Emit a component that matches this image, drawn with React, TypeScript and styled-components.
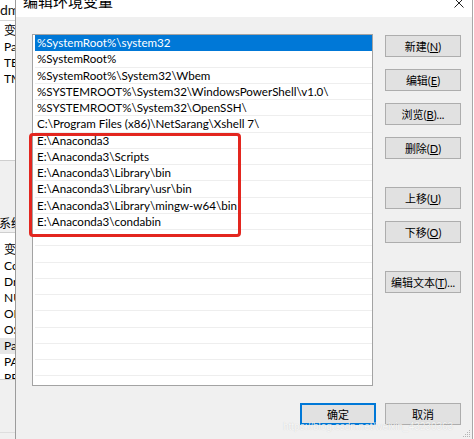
import React from "react";
import styled, { createGlobalStyle } from "styled-components";

const GlobalStyle = createGlobalStyle`
  html, body { margin: 0; padding: 0; background: #ffffff; }
  body { font-family: "Lato", "Noto Sans CJK SC", sans-serif; color: #000; }
`;

const Screen = styled.div`
  width: 474px;
  height: 439px;
  overflow: hidden;
  display: flex;
  background: #ffffff;
`;

/* ---------- background window (left strip) ---------- */
const BackWindow = styled.div`
  width: 15px;
  flex: none;
  overflow: hidden;
  display: flex;
  flex-direction: column;
  background: #f0f0f0;
  font-size: 12px;
`;

const BackTitle = styled.div`
  height: 21px;
  flex: none;
  box-sizing: border-box;
  background: #ffffff;
  border-bottom: 1px solid #d6d6d6;
  font-size: 14px;
  line-height: 20px;
  white-space: nowrap;
  color: #111;
`;

const BackList = styled.div<{ $height: number; $padTop: number }>`
  height: ${(p) => p.$height}px;
  flex: none;
  box-sizing: border-box;
  background: #ffffff;
  border-bottom: 1px solid #cfcfcf;
  padding-top: ${(p) => p.$padTop}px;
  overflow: hidden;
`;

const BackListTop = styled(BackList)`
  border-top: 1px solid #cfcfcf;
`;

const BackRow = styled.div<{ $active?: boolean }>`
  height: 16px;
  line-height: 16px;
  padding-left: 4px;
  white-space: nowrap;
  background: ${(p) => (p.$active ? "#e6e6e6" : "transparent")};
`;

const BackGap = styled.div<{ $height: number }>`
  height: ${(p) => p.$height}px;
  flex: none;
  box-sizing: border-box;
  display: flex;
  align-items: flex-end;
  white-space: nowrap;
  line-height: 16px;
`;

const BackLabel = styled.span`
  margin-left: -1px;
`;

const BackBottom = styled.div`
  height: 52px;
  flex: none;
  border-bottom: 1px solid #dedede;
`;

/* ---------- dialog ---------- */
const Dialog = styled.div`
  position: relative;
  width: 458px;
  flex: none;
  box-sizing: border-box;
  border-left: 1px solid #9c9c9c;
  border-right: 1px solid #a8a8a8;
  background: #f0f0f0;
  display: flex;
  flex-direction: column;
`;

const TitleBar = styled.div`
  height: 17px;
  flex: none;
  box-sizing: border-box;
  background: #ffffff;
  display: flex;
  align-items: flex-end;
  justify-content: space-between;
  padding: 0 8px 9px 7px;
  overflow: hidden;
`;

const TitleText = styled.span`
  font-family: "Noto Sans CJK SC", sans-serif;
  font-size: 15px;
  line-height: 15px;
  color: #000;
  white-space: nowrap;
`;

const Body = styled.div`
  flex: 1;
  display: flex;
  flex-direction: column;
  padding: 17px 11px 0 16px;
`;

const MainRow = styled.div`
  display: flex;
  gap: 12px;
  align-items: flex-start;
`;

const ListBox = styled.div`
  width: 341px;
  height: 352px;
  flex: none;
  box-sizing: border-box;
  border: 1px solid #a3a3a3;
  background: #ffffff;
  padding-left: 2px;
  overflow: hidden;
`;

const Row = styled.div<{ $selected?: boolean }>`
  height: 16.25px;
  box-sizing: border-box;
  line-height: 15.5px;
  padding-left: 2px;
  font-size: 11.6px;
  white-space: nowrap;
  border-bottom: 1px solid ${(p) => (p.$selected ? "#0078d7" : "#eeeeee")};
  background: ${(p) => (p.$selected ? "#0078d7" : "#ffffff")};
  color: ${(p) => (p.$selected ? "#ffffff" : "#000000")};
`;

const SideColumn = styled.div`
  display: flex;
  flex-direction: column;
  gap: 28px;
  padding-top: 1px;
`;

const Group = styled.div`
  display: flex;
  flex-direction: column;
  gap: 12px;
`;

const Button = styled.div<{ $primary?: boolean }>`
  width: 76px;
  height: 22px;
  box-sizing: border-box;
  display: flex;
  align-items: center;
  justify-content: center;
  background: #e1e1e1;
  border: 1px solid ${(p) => (p.$primary ? "#0078d7" : "#adadad")};
  box-shadow: ${(p) => (p.$primary ? "inset 0 0 0 1px #0078d7" : "none")};
  font-size: 11px;
  color: #000;
  white-space: nowrap;
  u {
    text-decoration-thickness: 1px;
    text-underline-offset: 1px;
  }
`;

const Footer = styled.div`
  display: flex;
  justify-content: flex-end;
  gap: 9px;
  margin-top: 17px;
`;

const Highlight = styled.div`
  position: absolute;
  left: 13px;
  top: 133px;
  width: 212px;
  height: 104px;
  box-sizing: border-box;
  border: 3px solid #e3261f;
  border-radius: 4px;
  pointer-events: none;
`;

const Watermark = styled.div`
  position: absolute;
  left: 267px;
  top: 421px;
  font-family: "Liberation Sans", sans-serif;
  font-size: 10px;
  color: rgba(255, 255, 255, 0.85);
  text-shadow: 0 0 1px rgba(0, 0, 0, 0.18);
  white-space: nowrap;
`;

const Grip = styled.svg`
  position: absolute;
  right: 1px;
  bottom: 1px;
`;

const paths = [
  "%SystemRoot%\\system32",
  "%SystemRoot%",
  "%SystemRoot%\\System32\\Wbem",
  "%SYSTEMROOT%\\System32\\WindowsPowerShell\\v1.0\\",
  "%SYSTEMROOT%\\System32\\OpenSSH\\",
  "C:\\Program Files (x86)\\NetSarang\\Xshell 7\\",
  "E:\\Anaconda3",
  "E:\\Anaconda3\\Scripts",
  "E:\\Anaconda3\\Library\\bin",
  "E:\\Anaconda3\\Library\\usr\\bin",
  "E:\\Anaconda3\\Library\\mingw-w64\\bin",
  "E:\\Anaconda3\\condabin",
];

const emptyRows = Array.from({ length: 10 }, (_, i) => i);

const userVars = ["变量", "Path", "TEMP", "TMP"];
const sysVars = [
  "变量",
  "ComSpec",
  "DriverData",
  "NUMBER_OF_PROCESSORS",
  "OPENSSL_CONF",
  "OS",
  "Path",
  "PATHEXT",
  "PROCESSOR_ARCHITECTURE",
];

const CloseIcon = () => (
  <svg width="10" height="10" viewBox="0 0 10 10">
    <path d="M0.5 0.5 L9.5 9.5 M9.5 0.5 L0.5 9.5" stroke="#222" strokeWidth="1" fill="none" />
  </svg>
);

export default function App() {
  return (
    <>
      <GlobalStyle />
      <Screen>
        <BackWindow>
          <BackTitle>dm</BackTitle>
          <BackList $height={140} $padTop={2}>
            {userVars.map((v) => (
              <BackRow key={v}>{v}</BackRow>
            ))}
          </BackList>
          <BackGap $height={71}>
            <BackLabel>系统变量(S)</BackLabel>
          </BackGap>
          <BackListTop $height={148} $padTop={9}>
            {sysVars.map((v) => (
              <BackRow key={v} $active={v === "Path"}>
                {v}
              </BackRow>
            ))}
          </BackListTop>
          <BackBottom />
        </BackWindow>

        <Dialog>
          <TitleBar>
            <TitleText>编辑环境变量</TitleText>
            <CloseIcon />
          </TitleBar>
          <Body>
            <MainRow>
              <ListBox>
                {paths.map((p, i) => (
                  <Row key={p} $selected={i === 0}>
                    {p}
                  </Row>
                ))}
                {emptyRows.map((i) => (
                  <Row key={"e" + i} />
                ))}
              </ListBox>
              <SideColumn>
                <Group>
                  <Button>
                    新建(<u>N</u>)
                  </Button>
                  <Button>
                    编辑(<u>E</u>)
                  </Button>
                  <Button>
                    浏览(<u>B</u>)...
                  </Button>
                  <Button>
                    删除(<u>D</u>)
                  </Button>
                </Group>
                <Group>
                  <Button>
                    上移(<u>U</u>)
                  </Button>
                  <Button>
                    下移(<u>O</u>)
                  </Button>
                </Group>
                <Group>
                  <Button>
                    编辑文本(<u>T</u>)...
                  </Button>
                </Group>
              </SideColumn>
            </MainRow>
            <Footer>
              <Button $primary>确定</Button>
              <Button>取消</Button>
            </Footer>
          </Body>
          <Highlight />
          <Watermark>https://blog.csdn.net/weixin_43230363</Watermark>
          <Grip width="8" height="8" viewBox="0 0 8 8">
            <g fill="#b5b5b5">
              <rect x="6" y="0" width="1" height="1" />
              <rect x="4" y="2" width="1" height="1" />
              <rect x="6" y="2" width="1" height="1" />
              <rect x="2" y="4" width="1" height="1" />
              <rect x="4" y="4" width="1" height="1" />
              <rect x="6" y="4" width="1" height="1" />
              <rect x="0" y="6" width="1" height="1" />
              <rect x="2" y="6" width="1" height="1" />
              <rect x="4" y="6" width="1" height="1" />
              <rect x="6" y="6" width="1" height="1" />
            </g>
          </Grip>
        </Dialog>
      </Screen>
    </>
  );
}
